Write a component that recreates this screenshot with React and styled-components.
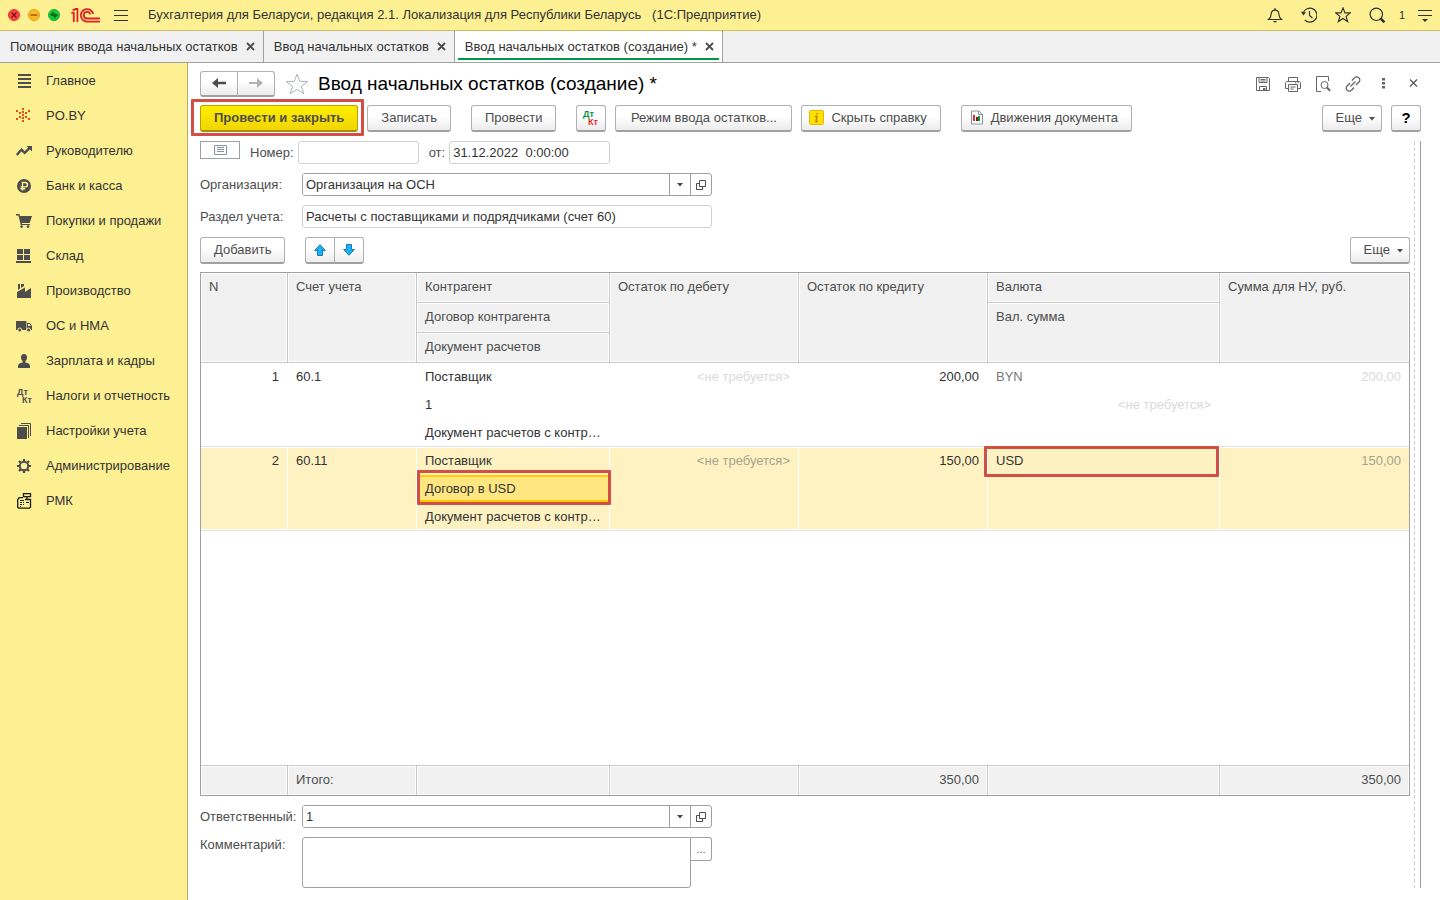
import React, { useState } from "react";
import styled, { createGlobalStyle } from "styled-components";

const GlobalStyle = createGlobalStyle`
    * {
        box-sizing: border-box;
    }

    body {
        margin: 0;
        background: #fff;
    }

    body, button, input, textarea, table {
        font-family: "Liberation Sans", Arial, sans-serif;
        font-size: 13px;
        line-height: 16px;
        color: #4d4d4d;
    }
`;

const Page = styled.div`
    display: flex;
    flex-direction: column;
    min-height: 100vh;
`;

const TitleBar = styled.header`
    display: flex;
    align-items: center;
    height: 31px;
    padding: 0 8px;
    background: #fcf093;
    border-bottom: 1px solid #c9bd67;
    color: #333;
`;

const WindowButtons = styled.div`
    display: flex;
    gap: 8px;
    margin-right: 11px;
`;

const IconButton = styled.button`
    display: flex;
    align-items: center;
    justify-content: center;
    padding: 0;
    border: none;
    background: none;
    cursor: pointer;
`;

const MenuButton = styled(IconButton)`
    margin: 0 20px 0 14px;
`;

const TitleActions = styled.div`
    display: flex;
    align-items: center;
    gap: 18px;
    margin-left: auto;
`;

const Counter = styled.span`
    width: 5px;
    margin: 0 -4px;
    font-size: 11px;
`;

const Tabs = styled.nav`
    display: flex;
    height: 32px;
    background: #f1f1f1;
    border-bottom: 1px solid #a0a0a0;
`;

const Tab = styled.div`
    position: relative;
    display: flex;
    align-items: center;
    gap: 8px;
    padding: 0 8px 0 10px;
    border-right: 1px solid #a0a0a0;
    background: ${(props) => (props.$active ? "#fff" : "transparent")};

    &::after {
        content: "";
        display: ${(props) => (props.$active ? "block" : "none")};
        position: absolute;
        left: 3px;
        right: 3px;
        bottom: 2px;
        height: 2px;
        background: #009646;
    }
`;

const TabLink = styled.a`
    color: #333;
    text-decoration: none;
    white-space: nowrap;
`;

const Body = styled.div`
    display: flex;
    flex: 1;
`;

const Sidebar = styled.nav`
    flex: none;
    width: 188px;
    background: #fcf093;
    border-right: 1px solid #b5ab64;
`;

const SidebarLink = styled.a`
    display: flex;
    align-items: center;
    gap: 12px;
    height: 35px;
    padding-left: 16px;
    color: #333;
    text-decoration: none;

    &:hover {
        background: #fff3b0;
    }
`;

const Content = styled.main`
    display: flex;
    flex-direction: column;
    flex: 1;
    min-width: 0;
    padding: 8px 19px 12px 12px;
`;

const Heading = styled.div`
    display: flex;
    align-items: center;
    height: 26px;
`;

const Title = styled.h1`
    margin: 0 0 0 9px;
    font-size: 19px;
    line-height: 24px;
    font-weight: normal;
    color: #000;
`;

const HeadingActions = styled.div`
    display: flex;
    gap: 14px;
    margin-left: auto;
`;

const Toolbar = styled.div`
    display: flex;
    gap: 20px;
    margin-top: 8px;
`;

const ButtonGroup = styled.div`
    display: flex;
    gap: 9px;
    margin-left: ${(props) => (props.$right ? "auto" : "0")};
`;

const Button = styled.button`
    display: flex;
    align-items: center;
    justify-content: center;
    gap: 7px;
    height: 27px;
    min-width: ${(props) => props.$minWidth || "30px"};
    padding: 0 ${(props) => (props.$icon ? "0" : "13px")} 1px;
    padding-left: ${(props) => (props.$withIcon ? "7px" : "")};
    border: 1px solid #b0b0b0;
    border-bottom: 2px solid #a0a0a0;
    border-radius: 3px;
    background: linear-gradient(#fff 40%, #ececec);
    white-space: nowrap;
    cursor: pointer;
`;

const PrimaryButton = styled(Button)`
    border-color: #b8a000;
    border-bottom-color: #a39000;
    background: linear-gradient(#ffee00, #f0d500);
    font-weight: bold;
`;

const MoreButton = styled(Button)`
    padding: 0 6px 1px 13px;

    svg {
        margin-top: 3px;
    }
`;

const HelpButton = styled(Button)`
    padding: 0 0 1px;
    font-size: 15px;
    font-weight: bold;
    color: #000;
`;

const Split = styled.div`
    display: flex;

    ${Button}:first-child {
        border-radius: 3px 0 0 3px;
    }

    ${Button}:last-child {
        margin-left: -1px;
        border-radius: 0 3px 3px 0;
    }
`;

const NavSplit = styled(Split)`
    margin-right: 10px;

    ${Button} {
        width: 38px;
        height: 26px;
    }
`;

// red frame drawn over the part that the reader should notice
const Marked = styled.div`
    position: relative;

    &::after {
        content: "";
        position: absolute;
        inset: ${(props) => props.$inset};
        border: 3px solid #d14f44;
        border-radius: 1px;
        pointer-events: none;
    }
`;

const Workspace = styled.div`
    display: flex;
    flex: 1;
    margin-top: 9px;
`;

const Form = styled.form`
    display: flex;
    flex-direction: column;
    flex: 1;
    min-width: 0;
    gap: 9px;
`;

const Splitter = styled.div`
    width: 7px;
    margin-left: 4px;
    border-right: 1px solid #a0a0a0;
    background: repeating-linear-gradient(#d0d0d0 0 4px, transparent 4px 6px) 0 0 / 1px 100% no-repeat;
`;

const Row = styled.div`
    display: flex;
    align-items: ${(props) => (props.$top ? "flex-start" : "center")};
`;

const Label = styled.label`
    flex: none;
    width: 102px;
`;

const ShortLabel = styled.label`
    margin: 0 4px 0 10px;
`;

const Input = styled.input`
    width: ${(props) => props.$width};
    height: 23px;
    padding: 0 3px;
    border: 1px solid #d0d0d0;
    border-radius: 3px;
    background: #fff;
    color: #333;
    outline: none;
`;

const StatusButton = styled(IconButton)`
    align-self: flex-start;
    width: 40px;
    height: 18px;
    border: 1px solid #a0a0a0;
`;

const Picker = styled.div`
    display: flex;
    width: 410px;
    height: 23px;
    border: 1px solid #a0a0a0;
    border-radius: 3px;
    overflow: hidden;
`;

const PickerInput = styled.input`
    flex: 1;
    min-width: 0;
    padding: 0 3px;
    border: none;
    color: #333;
    outline: none;
`;

const PickerButton = styled(IconButton)`
    width: 21px;
    border-left: 1px solid #a0a0a0;
`;

const Comment = styled.textarea`
    display: block;
    width: 389px;
    height: 51px;
    padding: 3px;
    border: 1px solid #a0a0a0;
    border-radius: 3px 0 3px 3px;
    resize: none;
    outline: none;
`;

const CommentButton = styled(IconButton)`
    width: 21px;
    height: 24px;
    border: 1px solid #a0a0a0;
    border-left: none;
    border-radius: 0 3px 3px 0;
    font-size: 11px;
`;

const Commands = styled.div`
    display: flex;
    gap: 20px;
`;

const TableBlock = styled.div`
    display: flex;
    flex-direction: column;
    flex: 1;
    gap: 8px;
`;

const TableWrapper = styled.div`
    display: grid;
    flex: 1;
    border: 1px solid #a0a0a0;
`;

const Table = styled.table`
    width: 100%;
    height: 100%;
    table-layout: fixed;
    border-collapse: separate;
    border-spacing: 0;
`;

const HeadCell = styled.th`
    height: 30px;
    padding: 6px 8px 0;
    border-right: 1px solid #c8c8c8;
    border-bottom: 1px solid #c8c8c8;
    background: #f1f1f1;
    box-shadow: inset 0 0 0 1px #fff;
    font-weight: normal;
    text-align: left;
    vertical-align: top;
    white-space: nowrap;

    &.last {
        border-right: none;
    }
`;

const Record = styled.tr`
    height: 84px;
    background: ${(props) => (props.$selected ? "#fff2c2" : "#fff")};
`;

const Cell = styled.td`
    padding: 0;
    border-right: 1px solid #fff;
    border-bottom: 1px solid #e2e2e2;
    box-shadow: inset 0 1px #fff, inset 0 -1px #fff;
    text-align: ${(props) => (props.$right ? "right" : "left")};
    vertical-align: top;
    color: #333;

    &:last-child {
        border-right: none;
    }

    /* the last line gives one pixel to the row border */
    > div:last-child {
        height: 27px;
    }
`;

const lineColors = {
    normal: "#333",
    currency: "#777",
    faded: "#dadada",
    muted: "#a6a28f",
};

const Line = styled.div`
    height: 28px;
    padding: 6px 8px;
    text-align: ${(props) => (props.$right ? "right" : "inherit")};
    white-space: nowrap;
    color: ${(props) => lineColors[props.$tone || "normal"]};
`;

const ActiveLine = styled(Line)`
    height: 27px;
    margin-bottom: 1px;
    padding: 4px 8px;
    border: solid #ffcc00;
    border-width: 2px 0;
    background: #ffe680;
`;

const Filler = styled.td`
    padding: 0;
`;

const FootCell = styled.td`
    height: 30px;
    padding: 6px 8px 0;
    border-top: 1px solid #c8c8c8;
    border-right: 1px solid #c8c8c8;
    background: #f1f1f1;
    box-shadow: inset 0 0 0 1px #fff;
    text-align: ${(props) => (props.$right ? "right" : "left")};
    vertical-align: top;

    &:last-child {
        border-right: none;
    }
`;

const FooterFields = styled.div`
    display: flex;
    flex-direction: column;
    gap: 9px;
`;

const Icon = ({ w = 16, h = 16, children, ...rest }) => (
    <svg width={w} height={h} viewBox={`0 0 ${w} ${h}`} fill="none" aria-hidden="true" {...rest}>
        {children}
    </svg>
);

const DtKtIcon = ({ top = "#4d4d4d", bottom = "#4d4d4d" }) => (
    <Icon w={18} h={17}>
        <text x="1" y="8" fontSize="9" fontWeight="bold" fill={top}>Дт</text>
        <text x="6" y="16" fontSize="9" fontWeight="bold" fill={bottom}>Кт</text>
    </Icon>
);

const Caret = () => (
    <Icon w={6} h={4}>
        <path d="M0 0h6L3 3.5z" fill="#4d4d4d" />
    </Icon>
);

const OpenIcon = () => (
    <Icon w={10} h={10} stroke="#4d4d4d">
        <path d="M3.5 .5h6v6h-6zM3 3.5H.5v6h6V7" />
    </Icon>
);

const menu = [
    {
        name: "Главное",
        icon: <path d="M2 2h13v2H2zM2 6h13v2H2zM2 10h13v2H2zM2 14h13v2H2z" />,
    },
    {
        name: "PO.BY",
        icon: (
            <path
                fill="#e84e0f"
                d="M6 1h2v2H6zM6 4h2v2H6zM6 7h2v2H6zM6 10h2v2H6zM6 13h2v2H6zM3 5h2v2H3zM9 5h2v2H9zM3 9h2v2H3zM9 9h2v2H9zM0 3h2v2H0zM12 3h2v2H12zM0 11h2v2H0zM12 11h2v2H12z"
            />
        ),
    },
    {
        name: "Руководителю",
        icon: (
            <>
                <path d="M.7 13l4.8-5.2 3.2 3L14 5.6" fill="none" stroke="#4d4d4d" strokeWidth="2.4" />
                <path d="M10.5 4H16v5.5z" />
            </>
        ),
    },
    {
        name: "Банк и касса",
        icon: (
            <>
                <circle cx="8" cy="9" r="7" />
                <path d="M6.5 13.5V5.5h2.8a2.2 2.2 0 0 1 0 4.4H4.5M4.5 11.8h4.6" fill="none" stroke="#fcf093" strokeWidth="1.4" />
            </>
        ),
    },
    {
        name: "Покупки и продажи",
        icon: (
            <>
                <path d="M0 2h3.4l.6 2h12l-2.4 7H5.8l.3 1H14v1H4.8L2.4 3.5H0z" />
                <circle cx="5.6" cy="14.6" r="1.3" />
                <circle cx="12" cy="14.6" r="1.3" />
            </>
        ),
    },
    {
        name: "Склад",
        icon: <path d="M1 2h6v5H1zM8 2h6v5H8zM1 8h6v5H1zM8 8h6v5H8zM0 14h15v2H0z" />,
    },
    {
        name: "Производство",
        icon: <path d="M1 16v-6l8-4.5V10l6-4v10zM2 2h2v4.5L2 8zM5 2h3v2L5 6z" />,
    },
    {
        name: "ОС и НМА",
        icon: (
            <>
                <path d="M0 4h10.4v9H0zM11 6h3l2 3v4h-5z" />
                <path d="M12 7h1.6l1.2 2H12z" fill="#fcf093" />
                <circle cx="3.8" cy="13" r="2" stroke="#fcf093" />
                <circle cx="12.6" cy="13" r="2" stroke="#fcf093" />
            </>
        ),
    },
    {
        name: "Зарплата и кадры",
        icon: (
            <>
                <ellipse cx="8" cy="5.5" rx="3" ry="3.6" />
                <path d="M6.6 8h2.8v2.4c2.6.3 4.6 1.4 4.6 3.6v2H2v-2c0-2.2 2-3.3 4.6-3.6z" />
            </>
        ),
    },
    {
        name: "Налоги и отчетность",
        custom: <DtKtIcon />,
    },
    {
        name: "Настройки учета",
        icon: (
            <>
                <path d="M1 5h10v12H1z" />
                <path d="M3 3.5h9.5V16M5 1.5h9.5V14" fill="none" stroke="#4d4d4d" />
            </>
        ),
    },
    {
        name: "Администрирование",
        icon: (
            <>
                <circle cx="8" cy="9" r="4.2" fill="none" stroke="#4d4d4d" strokeWidth="2" />
                <path
                    d="M8 4.5V2M8 13.5V16M3.5 9H1M12.5 9H15M4.8 5.8L3 4M11.2 12.2L13 14M11.2 5.8L13 4M4.8 12.2L3 14"
                    stroke="#4d4d4d"
                    strokeWidth="2.2"
                />
            </>
        ),
    },
    {
        name: "РМК",
        icon: (
            <g fill="none" stroke="#1a1a10" strokeWidth="1.3">
                <path d="M7.5 1.7h7v3h-7zM11 5v2M7 5.7H3L1.7 8v7.2l1 1h10.8l1-1V7.5H9" />
                <path d="M4 8.5h4M4 10.5h2M4 12.5h2M4 14.5h1M7 10.5h1M7 12.5h1M10 10.5h3" strokeWidth="1" />
            </g>
        ),
    },
];

const tabs = [
    "Помощник ввода начальных остатков",
    "Ввод начальных остатков",
    "Ввод начальных остатков (создание) *",
];

const columns = [87, 129, 193, 189, 189, 232, 189];

const records = [
    { n: 1, account: "60.1", contract: "1", credit: "200,00", currency: "BYN", amount: "<не требуется>", tax: "200,00" },
    { n: 2, account: "60.11", contract: "Договор в USD", credit: "150,00", currency: "USD", amount: "", tax: "150,00", selected: true },
];

const WindowControls = () => (
    <WindowButtons>
        <IconButton aria-label="Закрыть окно">
            <Icon w={12} h={12}>
                <circle cx="6" cy="6" r="5.5" fill="#fb4646" stroke="#e0342f" />
                <path d="M3.5 3.5l5 5M8.5 3.5l-5 5" stroke="#7d100c" strokeWidth="1.2" />
            </Icon>
        </IconButton>
        <IconButton aria-label="Свернуть">
            <Icon w={12} h={12}>
                <circle cx="6" cy="6" r="5.5" fill="#fdb924" stroke="#e59d14" />
                <path d="M2.5 6h7" stroke="#8f5a00" strokeWidth="1.4" />
            </Icon>
        </IconButton>
        <IconButton aria-label="Развернуть">
            <Icon w={12} h={12}>
                <circle cx="6" cy="6" r="5.5" fill="#14c83c" stroke="#10ad30" />
                <path d="M5.7 2.5v5.3L2 6zM6.3 9.5V4.200L10 6z" fill="#045c14" />
            </Icon>
        </IconButton>
    </WindowButtons>
);

const Logo = () => (
    <Icon w={29} h={15} stroke="#e31e24" strokeWidth="1.8">
        <path d="M.3 4.8h2.5v9.2M1.6 2.6L4.6 1h1.800v13" />
        <path d="M22.3 6A6.3 6.3 0 1 0 16 13.7h13" />
        <path d="M19.3 6.4A3.3 3.3 0 1 0 16 10.5h13" />
    </Icon>
);

const PickerField = ({ id, value, onChange }) => (
    <Picker>
        <PickerInput id={id} value={value} onChange={(e) => onChange(e.target.value)} />
        <PickerButton type="button" aria-label="Выбрать">
            <Caret />
        </PickerButton>
        <PickerButton type="button" aria-label="Открыть">
            <OpenIcon />
        </PickerButton>
    </Picker>
);

const BalanceTable = () => (
    <TableWrapper>
        <Table>
            <colgroup>
                {columns.map((width, i) => (
                    <col key={i} width={width} />
                ))}
            </colgroup>
            <thead>
                <tr>
                    <HeadCell rowSpan={3}>N</HeadCell>
                    <HeadCell rowSpan={3}>Счет учета</HeadCell>
                    <HeadCell>Контрагент</HeadCell>
                    <HeadCell rowSpan={3}>Остаток по дебету</HeadCell>
                    <HeadCell rowSpan={3}>Остаток по кредиту</HeadCell>
                    <HeadCell>Валюта</HeadCell>
                    <HeadCell rowSpan={3} className="last">Сумма для НУ, руб.</HeadCell>
                </tr>
                <tr>
                    <HeadCell>Договор контрагента</HeadCell>
                    <HeadCell rowSpan={2}>Вал. сумма</HeadCell>
                </tr>
                <tr>
                    <HeadCell>Документ расчетов</HeadCell>
                </tr>
            </thead>
            <tbody>
                {records.map((r) => (
                    <Record key={r.n} $selected={r.selected}>
                        <Cell $right><Line>{r.n}</Line></Cell>
                        <Cell><Line>{r.account}</Line></Cell>
                        <Cell>
                            <Line>Поставщик</Line>
                            {r.selected ? (
                                <Marked $inset="-5px -2px -3px 0">
                                    <ActiveLine>{r.contract}</ActiveLine>
                                </Marked>
                            ) : (
                                <Line>{r.contract}</Line>
                            )}
                            <Line>Документ расчетов с контр…</Line>
                        </Cell>
                        <Cell $right>
                            <Line $right $tone={r.selected ? "muted" : "faded"}>&lt;не требуется&gt;</Line>
                        </Cell>
                        <Cell $right><Line>{r.credit}</Line></Cell>
                        <Cell>
                            {r.selected ? (
                                <Marked $inset="-1px 0 -2px -4px">
                                    <Line>{r.currency}</Line>
                                </Marked>
                            ) : (
                                <Line $tone="currency">{r.currency}</Line>
                            )}
                            <Line $right $tone="faded">{r.amount}</Line>
                        </Cell>
                        <Cell $right>
                            <Line $tone={r.selected ? "muted" : "faded"}>{r.tax}</Line>
                        </Cell>
                    </Record>
                ))}
                <tr>
                    <Filler colSpan={7} />
                </tr>
            </tbody>
            <tfoot>
                <tr>
                    <FootCell />
                    <FootCell>Итого:</FootCell>
                    <FootCell />
                    <FootCell />
                    <FootCell $right>350,00</FootCell>
                    <FootCell />
                    <FootCell $right>350,00</FootCell>
                </tr>
            </tfoot>
        </Table>
    </TableWrapper>
);

const App = () => {
    const [number, setNumber] = useState("");
    const [date, setDate] = useState("31.12.2022  0:00:00");
    const [organization, setOrganization] = useState("Организация на ОСН");
    const [responsible, setResponsible] = useState("1");
    const [comment, setComment] = useState("");

    return (
        <Page>
            <GlobalStyle />
            <TitleBar>
                <WindowControls />
                <Logo />
                <MenuButton aria-label="Меню">
                    <Icon w={14} h={12} stroke="#333">
                        <path d="M0 1.5h14M0 6.5h14M0 11.5h14" />
                    </Icon>
                </MenuButton>
                <span>Бухгалтерия для Беларуси, редакция 2.1. Локализация для Республики Беларусь &nbsp; (1С:Предприятие)</span>
                <TitleActions>
                    <IconButton aria-label="Оповещения">
                        <Icon stroke="#333" strokeWidth="1.2">
                            <path d="M1.5 12.5h13c-2.4-1.7-2.3-3-2.6-5.5C11.6 4.6 10.2 3.2 8 3.2S4.4 4.6 4.1 7c-.3 2.5-.2 3.8-2.6 5.5z" />
                            <path d="M8 3V1" />
                            <path d="M5.8 14h4.4L8 15.8z" fill="#333" stroke="none" />
                        </Icon>
                    </IconButton>
                    <IconButton aria-label="История">
                        <Icon stroke="#333" strokeWidth="1.2">
                            <path d="M2.2 6.2A7 7 0 1 1 3.7 12.8M8.5 4v4.5l3 2.5" />
                            <path d="M0 4.5l5 1-2.8 3z" fill="#333" stroke="none" />
                        </Icon>
                    </IconButton>
                    <IconButton aria-label="Избранное">
                        <Icon stroke="#333" strokeWidth="1.2">
                            <path d="M8 .9l2 5h5.3l-4.2 3.5 1.5 5.2L8 11.5l-4.6 3.1 1.5-5.2L.7 5.9H6z" />
                        </Icon>
                    </IconButton>
                    <IconButton aria-label="Поиск">
                        <Icon stroke="#333">
                            <circle cx="7.3" cy="7.3" r="6.2" strokeWidth="1.2" />
                            <path d="M11.5 11.5l4 3.8" strokeWidth="2.5" />
                        </Icon>
                    </IconButton>
                    <Counter>1</Counter>
                    <IconButton aria-label="Сервис">
                        <Icon w={14} h={13} stroke="#333">
                            <path d="M0 1.5h14M0 6.5h14" />
                            <path d="M4 10h6l-3 3z" fill="#333" stroke="none" />
                        </Icon>
                    </IconButton>
                </TitleActions>
            </TitleBar>
            <Tabs>
                {tabs.map((name, i) => (
                    <Tab key={name} $active={i === 2}>
                        <TabLink href="#">{name}</TabLink>
                        <IconButton aria-label="Закрыть вкладку">
                            <Icon w={9} h={9} stroke="#4d4d4d" strokeWidth="1.8">
                                <path d="M1 1l7 7M8 1L1 8" />
                            </Icon>
                        </IconButton>
                    </Tab>
                ))}
            </Tabs>
            <Body>
                <Sidebar>
                    {menu.map((item) => (
                        <SidebarLink key={item.name} href="#">
                            {item.custom || (
                                <Icon w={18} h={17}>
                                    <g fill="#4d4d4d">{item.icon}</g>
                                </Icon>
                            )}
                            {item.name}
                        </SidebarLink>
                    ))}
                </Sidebar>
                <Content>
                    <Heading>
                        <NavSplit>
                            <Button $icon aria-label="Назад">
                                <Icon w={14} h={10}>
                                    <path d="M0 5l6-5v3.8h8v2.4H6V10z" fill="#4d4d4d" />
                                </Icon>
                            </Button>
                            <Button $icon aria-label="Вперед">
                                <Icon w={14} h={10}>
                                    <path d="M14 5L8 0v4H0v2h8v4z" fill="#b3b3b3" />
                                </Icon>
                            </Button>
                        </NavSplit>
                        <IconButton aria-label="В избранное">
                            <Icon w={24} h={22} stroke="#aab4be">
                                <path d="M12 1.2l2.8 7.2h8.1l-6.5 5 2.5 7.4L12 16.3l-6.9 4.5 2.5-7.4-6.5-5h8.1z" />
                            </Icon>
                        </IconButton>
                        <Title>Ввод начальных остатков (создание) *</Title>
                        <HeadingActions>
                            <IconButton aria-label="Сохранить">
                                <Icon stroke="#666">
                                    <path d="M1.5 1.5h12l1 1v12h-13zM4 1.5v5h8v-5M4.5 14.5v-4h7v4M5.5 3.5h5M5.5 5h5" />
                                    <path d="M8 12h2.5v2.5H8z" fill="#666" stroke="none" />
                                </Icon>
                            </IconButton>
                            <IconButton aria-label="Печать">
                                <Icon stroke="#666">
                                    <path d="M3.5 5V1.5h9V5M3 12.5H.5v-6l1-1h13l1 1v6H13M3.5 8.5h9v7h-9zM5.5 11h5M5.5 13h3M10 6.8h1.3M12.5 6.8h1.3" />
                                </Icon>
                            </IconButton>
                            <IconButton aria-label="Просмотр">
                                <Icon stroke="#666">
                                    <path d="M6 15.5H1.5V.5h12V5" />
                                    <circle cx="9.5" cy="9" r="3.5" />
                                    <path d="M12 11.5l3 3.2" strokeWidth="2" />
                                </Icon>
                            </IconButton>
                            <IconButton aria-label="Ссылка">
                                <Icon stroke="#666" strokeWidth="1.3">
                                    <path d="M5.5 10.5l5-5" />
                                    <path d="M7 4.5l2.5-2.7a2.9 2.9 0 0 1 4.4 0 2.9 2.9 0 0 1 0 4.2L11 9M9 11.5l-2.5 2.7a2.9 2.9 0 0 1-4.4 0 2.9 2.9 0 0 1 0-4.2L5 7" />
                                </Icon>
                            </IconButton>
                            <IconButton aria-label="Еще действия">
                                <Icon>
                                    <path d="M7 2h3v2.5H7zM7 6h3v2.500H7zM7 10h3v2.5H7z" fill="#666" />
                                </Icon>
                            </IconButton>
                            <IconButton aria-label="Закрыть">
                                <Icon stroke="#555" strokeWidth="1.2">
                                    <path d="M5 3.5l7 7M12 3.5l-7 7" />
                                </Icon>
                            </IconButton>
                        </HeadingActions>
                    </Heading>
                    <Toolbar>
                        <ButtonGroup>
                            <Marked $inset="-6px -6px -4px -9px">
                                <PrimaryButton>Провести и закрыть</PrimaryButton>
                            </Marked>
                            <Button>Записать</Button>
                        </ButtonGroup>
                        <Button>Провести</Button>
                        <ButtonGroup>
                            <Button $icon aria-label="Дебет и кредит">
                                <DtKtIcon top="#009646" bottom="#e8262b" />
                            </Button>
                            <Button $minWidth="177px">Режим ввода остатков...</Button>
                            <Button $withIcon>
                                <Icon w={15} h={15}>
                                    <rect x=".5" y=".5" width="14" height="14" rx="1.5" fill="#ffe000" stroke="#e5b800" />
                                    <path d="M6 6.5h2L7 11.5h2M8 3v1.6" stroke="#b88a00" strokeWidth="1.5" />
                                </Icon>
                                Скрыть справку
                            </Button>
                        </ButtonGroup>
                        <Button $withIcon>
                            <Icon w={15} h={15}>
                                <path d="M2.5 1h7.3L13.5 4.5V14h-11z" fill="#fff" stroke="#8494a5" />
                                <path d="M9.5 1v3.5h4" stroke="#8494a5" />
                                <path d="M4 5h2v6H4z" fill="#e8262b" />
                                <path d="M7 7h2v4H7z" fill="#7a1a1a" />
                                <path d="M9 6h2v5H9z" fill="#0a9b2e" />
                            </Icon>
                            Движения документа
                        </Button>
                        <ButtonGroup $right>
                            <MoreButton>Еще <Caret /></MoreButton>
                            <HelpButton>?</HelpButton>
                        </ButtonGroup>
                    </Toolbar>
                    <Workspace>
                        <Form onSubmit={(e) => e.preventDefault()}>
                            <Row>
                                <StatusButton type="button" aria-label="Статус документа">
                                    <Icon w={13} h={10} stroke="#8494a5">
                                        <path d="M.5 .5h12v9H.5zM3 2.5h7M3 4.5h7M3 6.5h7" />
                                    </Icon>
                                </StatusButton>
                                <ShortLabel htmlFor="number">Номер:</ShortLabel>
                                <Input id="number" $width="121px" value={number} onChange={(e) => setNumber(e.target.value)} />
                                <ShortLabel htmlFor="date">от:</ShortLabel>
                                <Input id="date" $width="161px" value={date} onChange={(e) => setDate(e.target.value)} />
                            </Row>
                            <Row>
                                <Label htmlFor="organization">Организация:</Label>
                                <PickerField id="organization" value={organization} onChange={setOrganization} />
                            </Row>
                            <Row>
                                <Label htmlFor="section">Раздел учета:</Label>
                                <Input id="section" $width="410px" readOnly value="Расчеты с поставщиками и подрядчиками (счет 60)" />
                            </Row>
                            <TableBlock>
                                <Commands>
                                    <Button type="button">Добавить</Button>
                                    <Split>
                                        <Button type="button" $icon aria-label="Вверх">
                                            <Icon w={12} h={12}>
                                                <path d="M6 .7l5.3 5.8H8.5v5h-5v-5H.7z" fill="#1cb0f6" stroke="#1579b5" />
                                            </Icon>
                                        </Button>
                                        <Button type="button" $icon aria-label="Вниз">
                                            <Icon w={12} h={12}>
                                                <path d="M6 11.3l5.3-5.8H8.5v-5h-5v5H.7z" fill="#1cb0f6" stroke="#1579b5" />
                                            </Icon>
                                        </Button>
                                    </Split>
                                    <ButtonGroup $right>
                                        <MoreButton type="button">Еще <Caret /></MoreButton>
                                    </ButtonGroup>
                                </Commands>
                                <BalanceTable />
                            </TableBlock>
                            <FooterFields>
                                <Row>
                                    <Label htmlFor="responsible">Ответственный:</Label>
                                    <PickerField id="responsible" value={responsible} onChange={setResponsible} />
                                </Row>
                                <Row $top>
                                    <Label htmlFor="comment">Комментарий:</Label>
                                    <Comment id="comment" value={comment} onChange={(e) => setComment(e.target.value)} />
                                    <CommentButton type="button">...</CommentButton>
                                </Row>
                            </FooterFields>
                        </Form>
                        <Splitter />
                    </Workspace>
                </Content>
            </Body>
        </Page>
    );
};

export default App;
